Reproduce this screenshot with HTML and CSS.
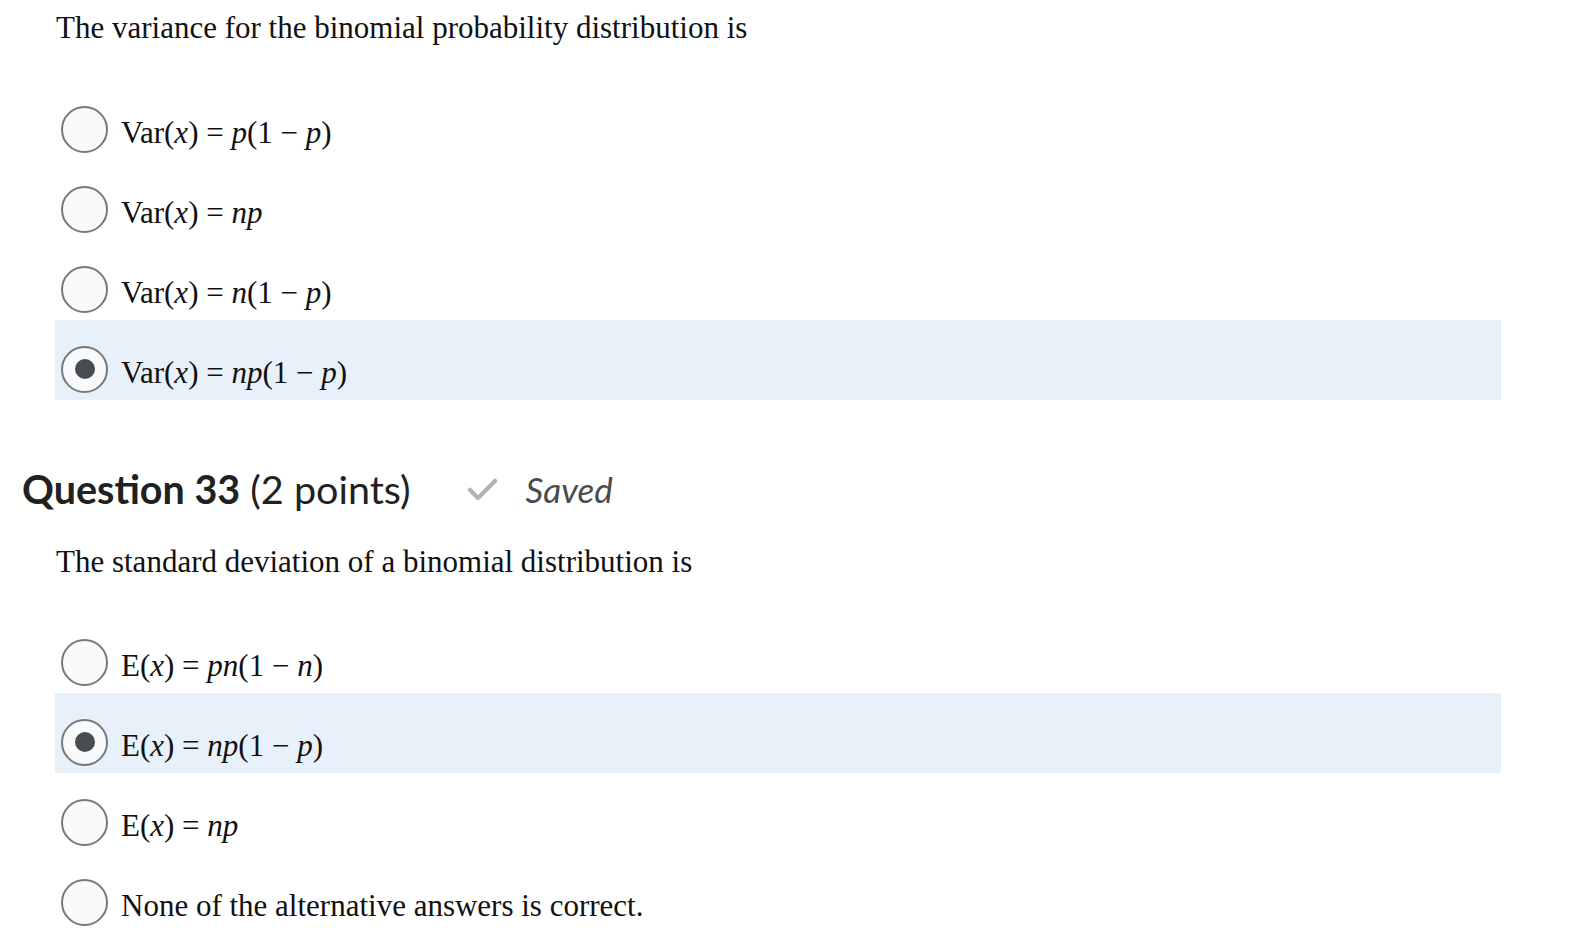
FILE: index.html
```html
<!DOCTYPE html>
<html>
<head>
<meta charset="utf-8">
<link rel="stylesheet" href="styles.css">
</head>
<body>
<div class="page">
  <div class="prompt prompt-first">The variance for the binomial probability distribution is</div>
  <div class="options">
    <label class="option"><span class="radio"></span><span class="answer">Var(<i>x</i>) = <i>p</i>(1 − <i>p</i>)</span></label>
    <label class="option"><span class="radio"></span><span class="answer">Var(<i>x</i>) = <i>np</i></span></label>
    <label class="option"><span class="radio"></span><span class="answer">Var(<i>x</i>) = <i>n</i>(1 − <i>p</i>)</span></label>
    <label class="option selected"><span class="radio checked"></span><span class="answer">Var(<i>x</i>) = <i>np</i>(1 − <i>p</i>)</span></label>
  </div>

  <div class="question-head">
    <h2 class="q-title"><strong>Question 33</strong> (2 points)</h2>
    <span class="saved">
      <svg class="check" width="31" height="25" viewBox="0 0 31 25"><polyline points="3,13 11,21 28,4" fill="none" stroke="#b1b5b9" stroke-width="4.5" stroke-linecap="round" stroke-linejoin="round"/></svg>
      <em>Saved</em>
    </span>
  </div>

  <div class="prompt prompt-second">The standard deviation of a binomial distribution is</div>
  <div class="options">
    <label class="option"><span class="radio"></span><span class="answer">E(<i>x</i>) = <i>pn</i>(1 − <i>n</i>)</span></label>
    <label class="option selected"><span class="radio checked"></span><span class="answer">E(<i>x</i>) = <i>np</i>(1 − <i>p</i>)</span></label>
    <label class="option"><span class="radio"></span><span class="answer">E(<i>x</i>) = <i>np</i></span></label>
    <label class="option"><span class="radio"></span><span class="answer">None of the alternative answers is correct.</span></label>
  </div>
</div>
</body>
</html>
```

FILE: styles.css
```css
html, body {
  margin: 0;
  padding: 0;
  background: #ffffff;
}

.page {
  padding-left: 22px;
  color: #000000;
}

.prompt {
  margin-left: 34px;
  font-family: "Liberation Serif", "Times New Roman", serif;
  font-size: 31px;
  line-height: 32px;
  color: #111111;
}

.prompt-first {
  padding-top: 12px;
}

.prompt-second {
  margin-top: 35px;
}

.options {
  margin-left: 33px;
  width: 1446px;
  margin-top: 36px;
}

.prompt-second + .options {
  margin-top: 35px;
}

.option {
  display: flex;
  align-items: center;
  height: 80px;
  box-sizing: border-box;
  padding-top: 18px;
  padding-left: 6px;
}

.option.selected {
  background: #e8f0fa;
}

.radio {
  flex: none;
  width: 47px;
  height: 47px;
  box-sizing: border-box;
  border: 2px solid #75797c;
  border-radius: 50%;
  background: #f9fafc;
  display: flex;
  align-items: center;
  justify-content: center;
}

.radio.checked::after {
  content: "";
  width: 20px;
  height: 20px;
  border-radius: 50%;
  background: #494c4e;
}

.answer {
  margin-left: 13px;
  padding-top: 8px;
  font-family: "Liberation Serif", "Times New Roman", serif;
  font-size: 31px;
  line-height: 32px;
  color: #111111;
}

.answer i {
  font-style: italic;
}

.question-head {
  display: flex;
  align-items: center;
  margin-top: 67px;
  height: 44px;
}

.q-title {
  margin: 0;
  font-family: Lato, "Open Sans", sans-serif;
  font-weight: 400;
  font-size: 39.5px;
  line-height: 44px;
  color: #202122;
}

.q-title strong {
  font-weight: 700;
}

.saved {
  display: flex;
  align-items: center;
  margin-left: 56px;
  font-family: Lato, "Open Sans", sans-serif;
  font-size: 35px;
  color: #494c4e;
}

.check {
  margin-right: 28px;
}

.saved em {
  font-style: italic;
}
```
